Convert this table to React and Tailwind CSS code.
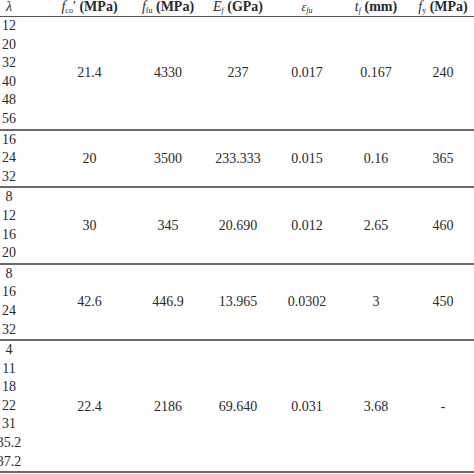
const groups = [
  { lambdas: ['12', '20', '32', '40', '48', '56'], values: ['21.4', '4330', '237', '0.017', '0.167', '240'] },
  { lambdas: ['16', '24', '32'], values: ['20', '3500', '233.333', '0.015', '0.16', '365'] },
  { lambdas: ['8', '12', '16', '20'], values: ['30', '345', '20.690', '0.012', '2.65', '460'] },
  { lambdas: ['8', '16', '24', '32'], values: ['42.6', '446.9', '13.965', '0.0302', '3', '450'] },
  { lambdas: ['4', '11', '18', '22', '31', '35.2', '37.2'], values: ['22.4', '2186', '69.640', '0.031', '3.68', '-'] },
]

function Sub({ children, italic }) {
  return <sub className={italic ? 'text-[8px] italic font-normal' : 'text-[8px] font-normal'}>{children}</sub>
}

export default function App() {
  return (
    <div className="w-[474px] h-[474px] overflow-hidden bg-white text-[#2a2a2a] font-['Liberation_Serif','Times_New_Roman',serif]">
      <table className="-ml-[31px] w-[509px] table-fixed border-collapse text-[14px] font-['Liberation_Serif','Times_New_Roman',serif]">
        <colgroup>
          <col className="w-[80px]" />
          <col className="w-[81px]" />
          <col className="w-[76px]" />
          <col className="w-[64px]" />
          <col className="w-[74px]" />
          <col className="w-[64px]" />
          <col className="w-[70px]" />
        </colgroup>
        <thead className="border-b border-[#555]">
          <tr className="h-[16.5px]">
            <th className="p-0 align-top leading-[14px] font-normal italic">λ</th>
            <th className="p-0 align-top leading-[14px] font-bold">
              <span className="italic font-normal">f</span>
              <Sub>co</Sub>
              <span className="font-normal">′</span> (MPa)
            </th>
            <th className="p-0 align-top leading-[14px] font-bold">
              <span className="italic font-normal">f</span>
              <Sub>fu</Sub> (MPa)
            </th>
            <th className="p-0 align-top leading-[14px] font-bold">
              <span className="italic font-normal">E</span>
              <Sub italic>f</Sub> (GPa)
            </th>
            <th className="p-0 align-top leading-[14px] font-normal">
              <span className="italic text-[12px]">ε</span>
              <Sub italic>fu</Sub>
            </th>
            <th className="p-0 align-top leading-[14px] font-bold">
              <span className="italic font-normal">t</span>
              <Sub italic>f</Sub> (mm)
            </th>
            <th className="p-0 align-top leading-[14px] font-bold">
              <span className="italic font-normal">f</span>
              <Sub>y</Sub> (MPa)
            </th>
          </tr>
        </thead>
        {groups.map((g, gi) => (
          <tbody key={gi} className="border-b-2 border-[#6a6a6a]">
            {g.lambdas.map((l, i) => (
              <tr key={i} className="h-[18.6px]">
                <td className="p-0 leading-[18.6px] text-center">{l}</td>
                {i === 0 &&
                  g.values.map((v, vi) => (
                    <td key={vi} rowSpan={g.lambdas.length} className="p-0 text-center align-middle">
                      {v}
                    </td>
                  ))}
              </tr>
            ))}
          </tbody>
        ))}
      </table>
    </div>
  )
}
